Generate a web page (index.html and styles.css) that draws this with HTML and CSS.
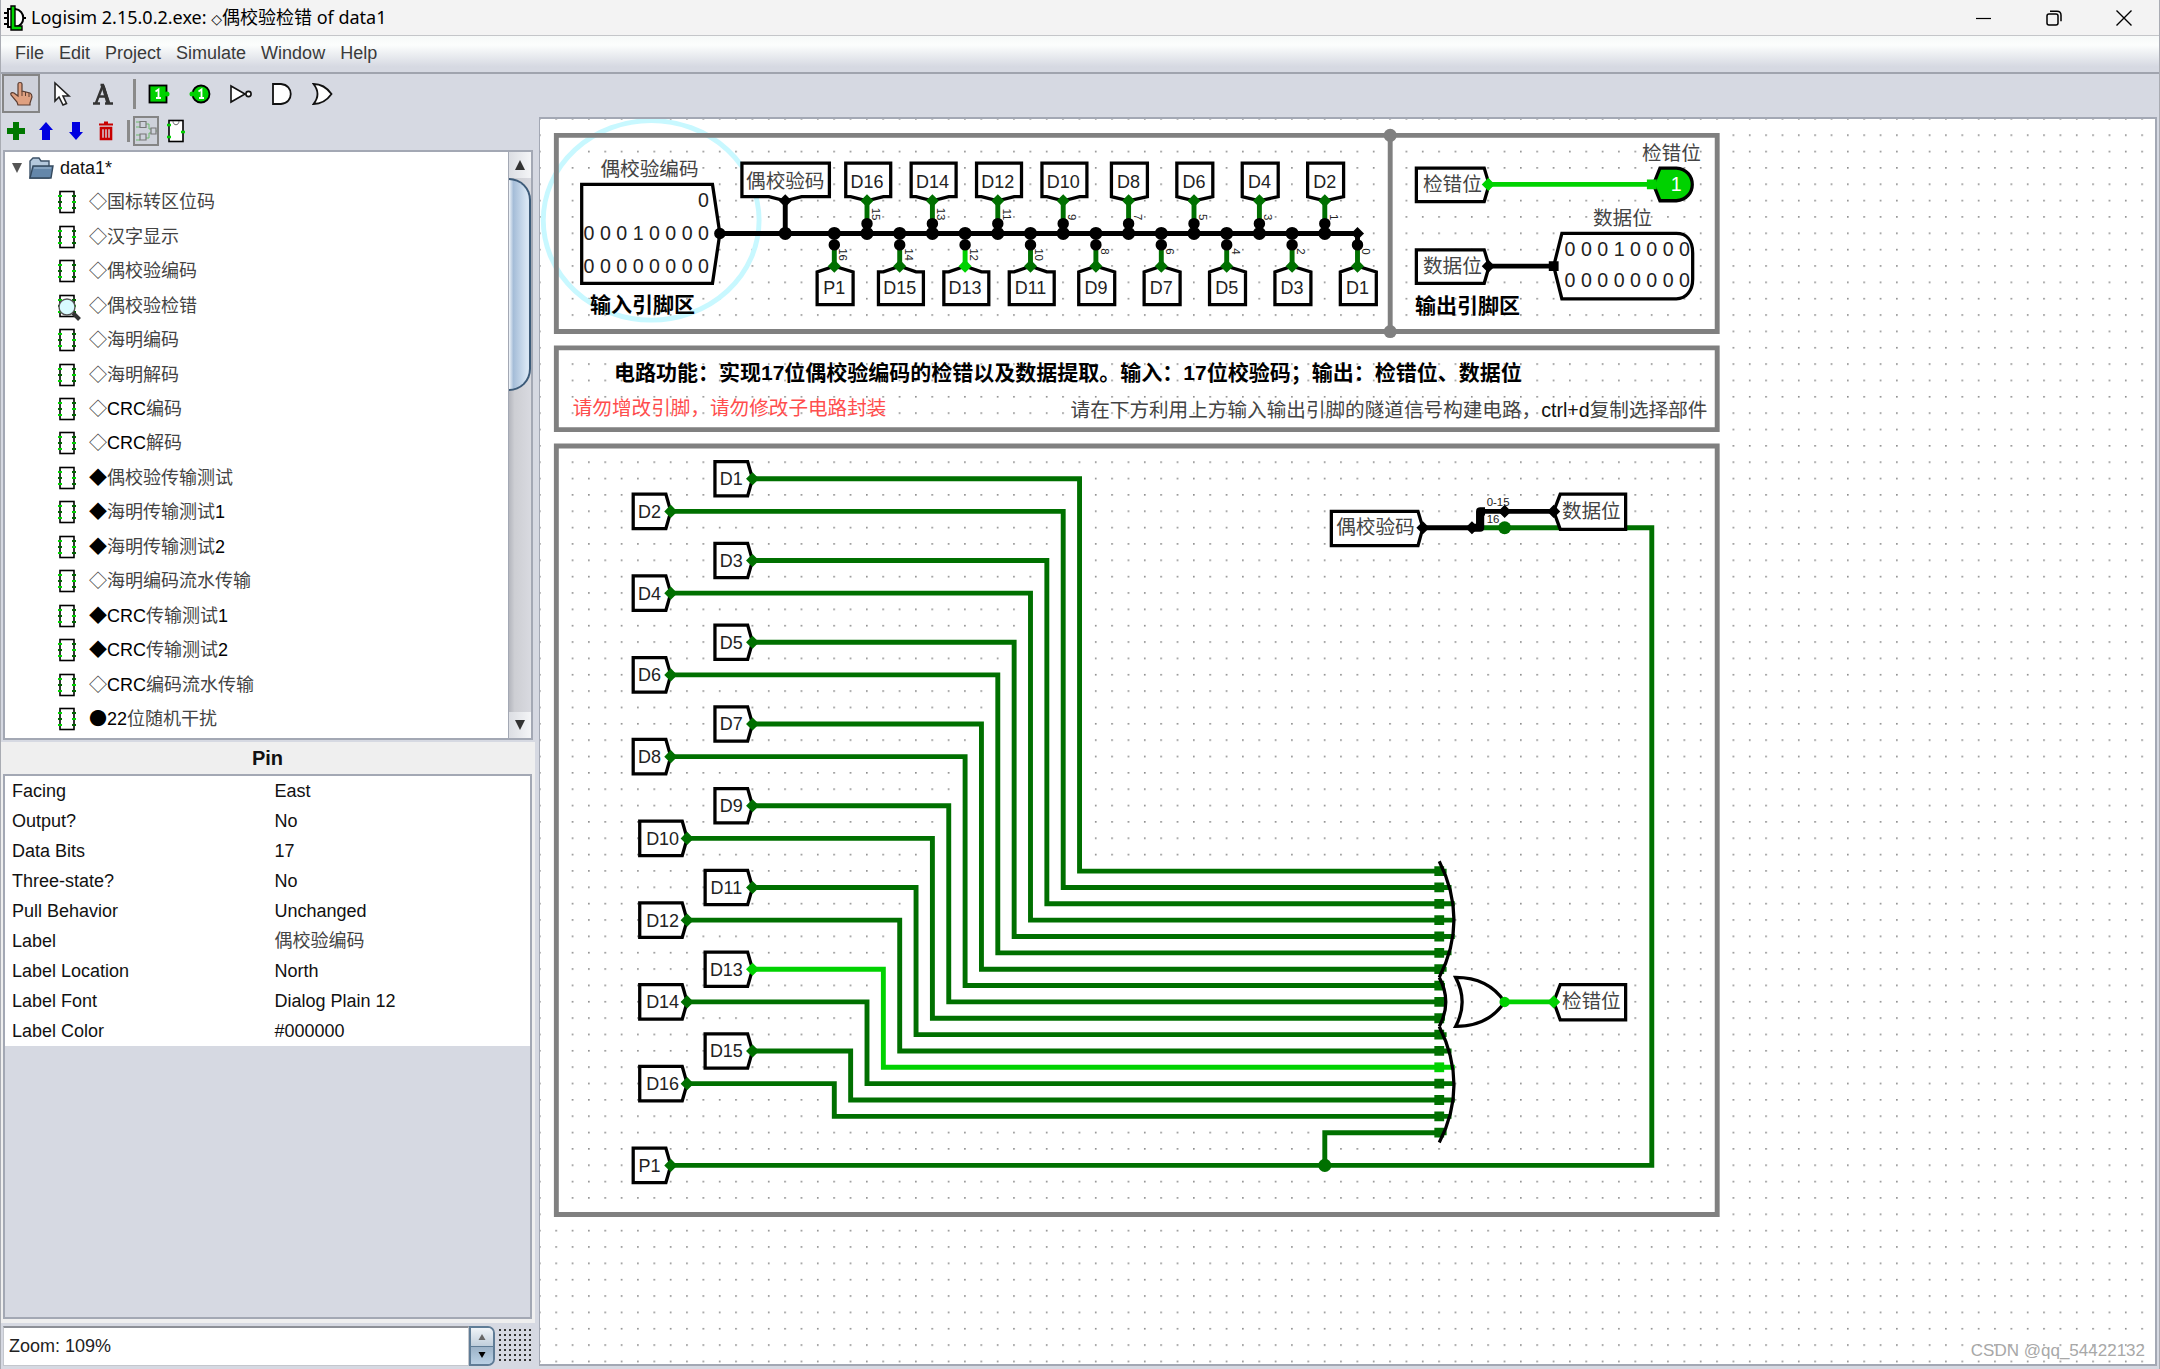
FILE: index.html
```html
<!DOCTYPE html>
<html lang="zh-CN">
<head>
<meta charset="utf-8">
<title>Logisim 2.15.0.2.exe: ◇偶校验检错 of data1</title>
<link rel="stylesheet" href="styles.css">
</head>
<body>
<svg class="defs" aria-hidden="true">
  <defs>
    <symbol id="chip" viewBox="0 0 20 24">
      <rect x="3" y="1.5" width="14" height="21" fill="#fff" stroke="#000" stroke-width="1.6"/>
      <path d="M1 6h4M1 18h4M15 12h4" stroke="#00d200" stroke-width="2"/>
      <path d="M1 12h4M15 6h4M15 18h4" stroke="#006400" stroke-width="2"/>
    </symbol>
  </defs>
</svg>
<div class="window">
  <header class="titlebar">
    <svg class="logo" viewBox="0 0 24 26" width="24" height="26">
      <path d="M1 8h5M1 13h5M1 19h5M20 13h3" stroke="#000" stroke-width="2"/>
      <path d="M5 4h7c11 1 11 17 0 18H5z" fill="#fff" stroke="#000" stroke-width="2"/>
      <path d="M8 1h4v20h7v4H8z" fill="#00d800" stroke="#000" stroke-width="1.4"/>
    </svg>
    <h1 class="title">Logisim 2.15.0.2.exe: <span class="lozenge">◇</span>偶校验检错 of data1</h1>
    <div class="controls">
      <button class="ctl" aria-label="Minimize"><svg width="16" height="16"><path d="M0 8.500h15" stroke="#000" stroke-width="1.2"/></svg></button>
      <button class="ctl" aria-label="Restore"><svg width="16" height="16" fill="none" stroke="#000" stroke-width="1.5"><rect x="1" y="4" width="11" height="11" rx="2"/><path d="M4 1.200h7c3 0 4 1 4 4v6"/></svg></button>
      <button class="ctl" aria-label="Close"><svg width="16" height="16"><path d="M.5.5l15 15M15.500.5l-15 15" stroke="#000" stroke-width="1.4"/></svg></button>
    </div>
  </header>
  <nav class="menubar">
    <button>File</button><button>Edit</button><button>Project</button><button>Simulate</button><button>Window</button><button>Help</button>
  </nav>
  <div class="toolbar">
    <button class="tool on" aria-label="Poke"><svg width="26" height="26" viewBox="0 0 26 26"><path d="M10 24l-1-3-6-7c-1-2 1-3 3-2l4 3V3c0-2 4-2 4 0v7l8 2c2 1 2 2 2 4l-2 6v2z" fill="#dfa080" stroke="#5a3c30" stroke-width="1.2"/><path d="M14 10v5M17.500 11v4M21 12v4" stroke="#5a3c30"/></svg></button>
    <button class="tool" aria-label="Edit"><svg width="20" height="26" viewBox="0 0 20 26"><path d="M3 2v18l4-4 4 8 3.500-1.500-3.500-7.500h6z" fill="#fff" stroke="#222" stroke-width="1.6"/></svg></button>
    <button class="tool" aria-label="Text"><svg width="22" height="24" viewBox="0 0 22 24"><path d="M11 3L4 21M11 3l6 18M6.500 14.500h8.500M1 21.500h7M13 21.500h8M8.500 3H12" stroke="#333" stroke-width="2.400" fill="none"/><path d="M11 4l5 17" stroke="#333" stroke-width="3.400"/></svg></button>
    <span class="sep"></span>
    <button class="tool" aria-label="Input pin"><svg width="22" height="20" viewBox="0 0 22 20"><rect x="1.500" y="1.500" width="17" height="17" fill="#00d200" stroke="#000" stroke-width="1.800"/><circle cx="19" cy="10" r="2.500" fill="#00d200"/><path d="M7.500 7.500L10.500 5.500v8.500M8 14h5" stroke="#fff" stroke-width="1.800" fill="none"/></svg></button>
    <button class="tool" aria-label="Output pin"><svg width="22" height="20" viewBox="0 0 22 20"><circle cx="12" cy="10" r="8.500" fill="#00d200" stroke="#000" stroke-width="1.800"/><circle cx="3" cy="10" r="2.500" fill="#00d200"/><path d="M9.500 7.500L12.500 5.500v8.500M10 14h5" stroke="#fff" stroke-width="1.800" fill="none"/></svg></button>
    <button class="tool" aria-label="NOT gate"><svg width="24" height="20" viewBox="0 0 24 20" fill="#fff" stroke="#111" stroke-width="1.600"><path d="M2 2l14 8-14 8z"/><circle cx="19.500" cy="10" r="2.600"/></svg></button>
    <button class="tool" aria-label="AND gate"><svg width="22" height="22" viewBox="0 0 22 22"><path d="M2 1h8c13 1 13 19 0 20H2z" fill="#fff" stroke="#111" stroke-width="1.800"/></svg></button>
    <button class="tool" aria-label="OR gate"><svg width="22" height="22" viewBox="0 0 22 22"><path d="M1.500 1c8 0 13 3 18 10-5 7-10 10-18 10q8-10 0-20z" fill="#fff" stroke="#111" stroke-width="1.800"/></svg></button>
  </div>
  <div class="work">
    <aside class="side">
      <div class="minibar">
        <button class="mini" aria-label="Add circuit"><svg width="20" height="20"><path d="M10 1v18M1 10h18" stroke="#007800" stroke-width="6"/></svg></button>
        <button class="mini" aria-label="Move up"><svg width="16" height="20"><path d="M8 1l7 8h-3v10H4V9H1z" fill="#0000e0"/></svg></button>
        <button class="mini" aria-label="Move down"><svg width="16" height="20"><path d="M8 19l7-8h-3V1H4v10H1z" fill="#0000e0"/></svg></button>
        <button class="mini" aria-label="Delete"><svg width="16" height="20"><path d="M1 3.500h14M6 1.500h4" stroke="#c80000" stroke-width="2"/><path d="M3 7h10v11H3z" fill="none" stroke="#c80000" stroke-width="2.600"/><path d="M6.500 7v10M9.500 7v10" stroke="#c80000" stroke-width="1.600"/></svg></button>
        <span class="sep"></span>
        <button class="mini on" aria-label="Edit layout"><svg width="22" height="22" fill="none"><path d="M1 2h4M1 7h4M1 15h4M1 20h4M11 4h3v5h2M11 18h3v-5h2M21 11h1" stroke="#6dbb6d"/><path d="M5 1.500h6v6H5zM5 14h6v6H5zM16 8h5v6h-5z" stroke="#777" stroke-width="1.200"/></svg></button>
        <button class="mini" aria-label="Edit appearance"><svg width="20" height="24"><rect x="3" y="1.500" width="14" height="21" fill="#fff" stroke="#000" stroke-width="1.600"/><path d="M7 2c0 5 6 5 6 0" fill="none" stroke="#666"/><path d="M1 6h4M1 18h4M15 13h4" stroke="#00d200" stroke-width="2.400"/></svg></button>
      </div>
      <div class="tree">
        <ul class="tree-list">
          <li class="root"><svg width="12" height="12"><path d="M1 1h10L6 11z" fill="#555"/></svg><svg width="26" height="24" viewBox="0 0 26 24"><path d="M2 22V5l3-3h6l2 3h8v17z" fill="#b4c8dc" stroke="#3c5268" stroke-width="1.400"/><path d="M5 10h20l-2 12H2z" fill="#6487aa" stroke="#34495e" stroke-width="1.400"/><path d="M6 12h17" stroke="#a9c1d8"/></svg><span>data1*</span></li>
          <li><svg><use href="#chip"/></svg><span><i>◇</i>国标转区位码</span></li>
          <li><svg><use href="#chip"/></svg><span><i>◇</i>汉字显示</span></li>
          <li><svg><use href="#chip"/></svg><span><i>◇</i>偶校验编码</span></li>
          <li><svg><use href="#chip"/><circle cx="10" cy="13" r="8" fill="#d8fbff" stroke="#555" stroke-width="1.4"/><path d="M16 19l6.500 6.500" stroke="#333" stroke-width="4"/></svg><span><i>◇</i>偶校验检错</span></li>
          <li><svg><use href="#chip"/></svg><span><i>◇</i>海明编码</span></li>
          <li><svg><use href="#chip"/></svg><span><i>◇</i>海明解码</span></li>
          <li><svg><use href="#chip"/></svg><span><i>◇</i><b>CRC</b>编码</span></li>
          <li><svg><use href="#chip"/></svg><span><i>◇</i><b>CRC</b>解码</span></li>
          <li><svg><use href="#chip"/></svg><span><i class="full">◆</i>偶校验传输测试</span></li>
          <li><svg><use href="#chip"/></svg><span><i class="full">◆</i>海明传输测试<b>1</b></span></li>
          <li><svg><use href="#chip"/></svg><span><i class="full">◆</i>海明传输测试<b>2</b></span></li>
          <li><svg><use href="#chip"/></svg><span><i>◇</i>海明编码流水传输</span></li>
          <li><svg><use href="#chip"/></svg><span><i class="full">◆</i><b>CRC</b>传输测试<b>1</b></span></li>
          <li><svg><use href="#chip"/></svg><span><i class="full">◆</i><b>CRC</b>传输测试<b>2</b></span></li>
          <li><svg><use href="#chip"/></svg><span><i>◇</i><b>CRC</b>编码流水传输</span></li>
          <li><svg><use href="#chip"/></svg><span><i class="full">●</i><b>22</b>位随机干扰</span></li>
        </ul>
        <div class="scroll">
          <button class="arrow" aria-label="Scroll up"><svg width="12" height="12"><path d="M6 1l5 10H1z" fill="#333"/></svg></button>
          <div class="track"><div class="thumb"></div></div>
          <button class="arrow" aria-label="Scroll down"><svg width="12" height="12"><path d="M6 11L1 1h10z" fill="#333"/></svg></button>
        </div>
      </div>
      <section class="props">
        <h2>Pin</h2>
        <div class="props-box">
          <table>
            <tr><th>Facing</th><td>East</td></tr>
            <tr><th>Output?</th><td>No</td></tr>
            <tr><th>Data Bits</th><td>17</td></tr>
            <tr><th>Three-state?</th><td>No</td></tr>
            <tr><th>Pull Behavior</th><td>Unchanged</td></tr>
            <tr><th>Label</th><td class="cjk">偶校验编码</td></tr>
            <tr><th>Label Location</th><td>North</td></tr>
            <tr><th>Label Font</th><td>Dialog Plain 12</td></tr>
            <tr><th>Label Color</th><td>#000000</td></tr>
          </table>
        </div>
      </section>
      <div class="zoombar">
        <input type="text" value="Zoom: 109%" aria-label="Zoom">
        <div class="spin">
          <button aria-label="Zoom in"><svg width="8" height="8"><path d="M4 1l3.500 6h-7z" fill="#666"/></svg></button>
          <button class="down" aria-label="Zoom out"><svg width="8" height="8"><path d="M4 7L.5 1h7z" fill="#000"/></svg></button>
        </div>
        <div class="gridtoggle"></div>
      </div>
    </aside>
    <main class="canvas">
      <svg class="sheet" width="100%" height="100%">
        <defs>
          <pattern id="grid" width="10" height="10" patternUnits="userSpaceOnUse" patternTransform="translate(-1 -1) scale(1.635)"><rect width="1" height="1" fill="#8c8c8c"/></pattern>
        </defs>
        <rect width="100%" height="100%" fill="url(#grid)"/>
        <g transform="scale(1.635)">
          <ellipse class="halo" cx="68" cy="62" rx="66" ry="61"/>
          <path class="frame" d="M10 10h710v120H10zM520 10v120M10 140h710v50H10zM10 200h710v470H10z"/>
          <circle class="fdot" cx="520" cy="10" r="4"/><circle class="fdot" cx="520" cy="130" r="4"/>

          <!-- input pin, bus and splitter -->
          <path class="box" d="M25.500 40h80l4.500 30-4.500 30.500h-80z"/>
          <path class="wire bus" d="M110 70h390v6M150 70V50"/>
          <g class="wire off">
            <path d="M200 64V50M240 64V50M280 64V50M320 64V50M360 64V50M400 64V50M440 64V50M480 64V50"/>
            <path d="M180 76v14M220 76v14M300 76v14M340 76v14M380 76v14M420 76v14M460 76v14M500 76v14"/>
          </g>
          <path class="wire lit" d="M260 76v14"/>
          <path class="dots" d="M150 70h0M200 70h0M240 70h0M280 70h0M320 70h0M360 70h0M400 70h0M440 70h0M480 70h0M180 70h0M220 70h0M260 70h0M300 70h0M340 70h0M380 70h0M420 70h0M460 70h0"/>
          <path class="dots small" d="M110 70h0M200 64h0M240 64h0M280 64h0M320 64h0M360 64h0M400 64h0M440 64h0M480 64h0M180 77h0M220 77h0M260 77h0M300 77h0M340 77h0M380 77h0M420 77h0M460 77h0M500 77h0"/>
          <path class="port" d="M500 66l4 4-4 4-4-4z"/>
          <path class="box" d="M123.500 27H177v20.500h-17L150 50l-10-2.500h-16.500z"/>
          <path class="box" d="M187 27h27.500v20.500H210L200 50l-10-2.500h-3zM227 27h27.500v20.500H250L240 50l-10-2.500h-3zM267 27h27.500v20.500H290L280 50l-10-2.500h-3zM307 27h27.500v20.500H330L320 50l-10-2.500h-3z"/>
          <path class="box" d="M349.500 27h22v20.500L360 50l-10.500-2.500zM389.500 27h22v20.500L400 50l-10.500-2.500zM429.500 27h22v20.500L440 50l-10.500-2.500zM469.500 27h22v20.500L480 50l-10.500-2.500z"/>
          <path class="box" d="M169.500 113.500h22V93.500L180 90l-10.500 3.500zM329.500 113.500h22V93.500L340 90l-10.500 3.500zM369.500 113.500h22V93.500L380 90l-10.500 3.500zM409.500 113.500h22V93.500L420 90l-10.500 3.500zM449.500 113.500h22V93.500L460 90l-10.500 3.500zM489.500 113.500h22V93.500L500 90l-10.500 3.500z"/>
          <path class="box" d="M207 113.500h27.500v-20H230L220 90l-10 3.500h-3zM247 113.500h27.500v-20H270L260 90l-10 3.500h-3zM287 113.500h27.500v-20H310L300 90l-10 3.500h-3z"/>
          <path class="port" d="M150 46l4 4-4 4-4-4z"/>
          <g class="port off">
            <path d="M200 46l4 4-4 4-4-4zM240 46l4 4-4 4-4-4zM280 46l4 4-4 4-4-4zM320 46l4 4-4 4-4-4zM360 46l4 4-4 4-4-4zM400 46l4 4-4 4-4-4zM440 46l4 4-4 4-4-4zM480 46l4 4-4 4-4-4z"/>
            <path d="M180 86l4 4-4 4-4-4zM220 86l4 4-4 4-4-4zM300 86l4 4-4 4-4-4zM340 86l4 4-4 4-4-4zM380 86l4 4-4 4-4-4zM420 86l4 4-4 4-4-4zM460 86l4 4-4 4-4-4zM500 86l4 4-4 4-4-4z"/>
          </g>
          <path class="port lit" d="M260 86l4 4-4 4-4-4z"/>

          <!-- output pins -->
          <path class="box" d="M536 30h41.500l3 10-3 10.500H536zM536 80h41.500l3 10-3 10.500H536z"/>
          <path class="box green" d="M681 40l4-10h10c13 1 13 19 0 20h-10z"/>
          <path class="box" d="M620 90l5-20h70c6 0 10 4 10 12v16c0 7-4 12-10 12h-70z"/>
          <path class="wire lit" d="M580 40h100"/><path class="wire bus" d="M580 90h40"/>
          <path class="port lit" d="M580 36l4 4-4 4-4-4zM677 37h6v6h-6z"/>
          <path class="port" d="M580 86l4 4-4 4-4-4zM617 87h6v6h-6z"/>

          <!-- wiring into the parity gate -->
          <g class="wire off">
            <path d="M130 220h200v240h223M80 240h240v230h236M130 270h180v210h248M80 290h220v200h258M130 320h160v180h268M80 340h200v170h276M130 370h140v150h283M80 390h180v140h292M130 420h120v120h303M90 440h150v110h312M130 470h100v90h323M90 490h130v80h336"/>
            <path d="M90 540h110v50h358M130 570h60v30h368M90 590h90v20h376M80 640h600V250H575M480 640v-20h73"/>
          </g>
          <path class="wire lit" d="M130 520h80v60h348M590 540h30"/>
          <path class="port off" d="M547 457h6v6h-6zM547 467h6v6h-6zM547 477h6v6h-6zM547 487h6v6h-6zM547 497h6v6h-6zM547 507h6v6h-6zM547 517h6v6h-6zM547 527h6v6h-6zM547 537h6v6h-6zM547 547h6v6h-6zM547 557h6v6h-6zM547 567h6v6h-6zM547 587h6v6h-6zM547 597h6v6h-6zM547 607h6v6h-6zM547 617h6v6h-6z"/>
          <path class="port lit" d="M547 577h6v6h-6z"/>
          <path class="gate" d="M550 454q18 36 0 71M550 525q8 15 0 30M550 555q18 36 0 71"/>
          <path class="gate" d="M590 540q-10-15-30-15 8 15 0 30 20 0 30-15z"/>
          <circle class="port lit" cx="590" cy="540" r="3.200"/>
          <circle class="port off" cx="480" cy="640" r="4"/><circle class="port off" cx="590" cy="250" r="4"/>
          <path class="wire bus" d="M540 250h30M575 240h45"/>
          <path class="thick" d="M570 250h5v-10h3"/>
          <path class="box" d="M484 240h53l3 10-3 11h-53z"/>
          <path class="box" d="M620 240l4-10.500h40V251h-40zM620 540l4-10.500h40V551h-40z"/>
          <path class="port" d="M540 246l4 4-4 4-4-4zM570 246l4 4-4 4-4-4zM590 236l4 4-4 4-4-4zM620 236l4 4-4 4-4-4z"/>
          <path class="port lit" d="M620 536l4 4-4 4-4-4z"/>

          <path class="box" d="M107 209.500h20l3 10.500-3 10.500h-20zM107 259.500h20l3 10.500-3 10.500h-20zM107 309.500h20l3 10.500-3 10.500h-20zM107 359.500h20l3 10.500-3 10.500h-20zM107 409.500h20l3 10.500-3 10.500h-20z"/>
          <path class="box" d="M57 229.500h20l3 10.500-3 10.500H57zM57 279.500h20l3 10.500-3 10.500H57zM57 329.500h20l3 10.500-3 10.500H57zM57 379.500h20l3 10.500-3 10.500H57zM57 629.500h20l3 10.500-3 10.500H57z"/>
          <path class="box" d="M101 459.500h26l3 10.500-3 10.500h-26zM101 509.500h26l3 10.500-3 10.500h-26zM101 559.500h26l3 10.500-3 10.500h-26zM61 429.500h26l3 10.500-3 10.500H61zM61 479.500h26l3 10.500-3 10.500H61zM61 529.500h26l3 10.500-3 10.500H61zM61 579.500h26l3 10.500-3 10.500H61z"/>
          <path class="port off" d="M130 216l4 4-4 4-4-4zM130 266l4 4-4 4-4-4zM130 316l4 4-4 4-4-4zM130 366l4 4-4 4-4-4zM130 416l4 4-4 4-4-4zM130 466l4 4-4 4-4-4zM130 566l4 4-4 4-4-4zM80 236l4 4-4 4-4-4zM80 286l4 4-4 4-4-4zM80 336l4 4-4 4-4-4zM80 386l4 4-4 4-4-4zM80 636l4 4-4 4-4-4zM90 436l4 4-4 4-4-4zM90 486l4 4-4 4-4-4zM90 536l4 4-4 4-4-4zM90 586l4 4-4 4-4-4z"/>
          <path class="port lit" d="M130 516l4 4-4 4-4-4z"/>

          <!-- tunnel names -->
          <g class="name">
            <text x="200" y="42">D16</text><text x="240" y="42">D14</text><text x="280" y="42">D12</text><text x="320" y="42">D10</text><text x="360" y="42">D8</text><text x="400" y="42">D6</text><text x="440" y="42">D4</text><text x="480" y="42">D2</text>
            <text x="180" y="107">P1</text><text x="220" y="107">D15</text><text x="260" y="107">D13</text><text x="300" y="107">D11</text><text x="340" y="107">D9</text><text x="380" y="107">D7</text><text x="420" y="107">D5</text><text x="460" y="107">D3</text><text x="500" y="107">D1</text>
            <text x="117" y="224">D1</text><text x="67" y="244">D2</text><text x="117" y="274">D3</text><text x="67" y="294">D4</text><text x="117" y="324">D5</text><text x="67" y="344">D6</text><text x="117" y="374">D7</text><text x="67" y="394">D8</text><text x="117" y="424">D9</text>
            <text x="75" y="444">D10</text><text x="114" y="474">D11</text><text x="75" y="494">D12</text><text x="114" y="524">D13</text><text x="75" y="544">D14</text><text x="114" y="574">D15</text><text x="75" y="594">D16</text><text x="67" y="644">P1</text>
          </g>
          <g class="label">
            <text x="67" y="35">偶校验编码</text><text x="150" y="42">偶校验码</text><text x="558" y="44">检错位</text><text x="558" y="94">数据位</text><text x="692" y="25">检错位</text><text x="662" y="65">数据位</text>
            <text x="511" y="254">偶校验码</text><text x="643" y="244">数据位</text><text x="643" y="544">检错位</text>
          </g>
          <g class="digit">
            <text x="100" y="54">0</text>
            <text x="30 40 50 60 70 80 90 100" y="74">00010000</text>
            <text x="30 40 50 60 70 80 90 100" y="94">00000000</text>
            <text x="630 640 650 660 670 680 690 700" y="84">00010000</text>
            <text x="630 640 650 660 670 680 690 700" y="103">00000000</text>
            <text class="white" x="695" y="44">1</text>
          </g>
          <g class="tiny">
            <text x="579" y="237">0-15</text><text x="579" y="247">16</text>
            <g class="tend">
              <text transform="translate(203 62) rotate(90)">15</text><text transform="translate(243 62) rotate(90)">13</text><text transform="translate(283 62) rotate(90)">11</text><text transform="translate(323 62) rotate(90)">9</text><text transform="translate(363 62) rotate(90)">7</text><text transform="translate(403 62) rotate(90)">5</text><text transform="translate(443 62) rotate(90)">3</text><text transform="translate(483 62) rotate(90)">1</text>
            </g>
            <g class="tstart">
              <text transform="translate(183 79) rotate(90)">16</text><text transform="translate(223 79) rotate(90)">14</text><text transform="translate(263 79) rotate(90)">12</text><text transform="translate(303 79) rotate(90)">10</text><text transform="translate(343 79) rotate(90)">8</text><text transform="translate(383 79) rotate(90)">6</text><text transform="translate(423 79) rotate(90)">4</text><text transform="translate(463 79) rotate(90)">2</text><text transform="translate(503 79) rotate(90)">0</text>
            </g>
          </g>
          <text class="note red" x="20" y="181">请勿增改引脚，请勿修改子电路封装</text>
          <text class="note end" x="714" y="182">请在下方利用上方输入输出引脚的隧道信号构建电路，<tspan class="latin">ctrl+d</tspan>复制选择部件</text>
        </g>
        <text class="head" x="74" y="261">电路功能：实现17位偶校验编码的检错以及数据提取。输入：17位校验码；输出：检错位、数据位</text>
        <text class="head" x="50" y="193">输入引脚区</text>
        <text class="head" x="875" y="194">输出引脚区</text>
      </svg>
      <span class="watermark">CSDN @qq_54422132</span>
    </main>
  </div>
</div>
</body>
</html>
```

FILE: styles.css
```css
* { box-sizing: border-box; }

html, body { height: 100%; margin: 0; }

body {
  font-family: "Liberation Sans", "Noto Sans CJK SC", sans-serif;
  font-size: 18px;
  color: #111;
  background: #d6d9e2;
}

button {
  font: inherit;
  color: inherit;
  padding: 0;
  border: 0;
  background: none;
}

svg { display: block; flex: none; }

.defs { position: absolute; width: 0; height: 0; }

.window {
  display: flex;
  flex-direction: column;
  min-height: 100vh;
  border-left: 1px solid #a9acb3;
  border-right: 1px solid #a9acb3;
}

.titlebar {
  display: flex;
  align-items: center;
  height: 36px;
  padding-left: 2px;
  background: #f3f3f3;
  border-bottom: 1px solid #c4c6c9;
}

.title {
  flex: 1;
  margin: 0 0 0 4px;
  font: 400 18px/34px "Noto Sans", "Noto Sans CJK SC", sans-serif;
  color: #000;
}

.lozenge { font-size: 14px; font-family: "DejaVu Sans", sans-serif; }

.controls { display: flex; }

.ctl {
  display: grid;
  place-items: center;
  width: 70px;
  height: 34px;
}

.menubar {
  display: flex;
  gap: 15px;
  height: 38px;
  padding: 0 14px 2px;
  color: #3a3a3a;
  background: linear-gradient(#f6f9f8, #fcfefd 25%, #d6d9e2 85%);
  border-bottom: 2px solid #a0a4ae;
}

.toolbar { display: flex; height: 42px; padding-left: 1px; }

.tool {
  display: grid;
  place-items: center;
  width: 38px;
  height: 39px;
  margin-right: 3px;
}

.on { border: 2px solid #858585; background: #ced1da; }

.sep { width: 3px; background: #8a8a8a; }

.toolbar .sep { height: 30px; margin: 5px 4px 0 8px; }

.work { display: flex; flex: 1; padding: 0 2px 3px 2px; }

.side { display: flex; flex-direction: column; width: 536px; flex: none; }

.minibar { display: flex; align-items: center; height: 29px; margin-bottom: 5px; }

.mini { display: grid; place-items: center; width: 26px; height: 30px; margin-right: 4px; }

.minibar .sep { height: 22px; margin: 0 3px 0 4px; }

.tree {
  display: flex;
  width: 530px;
  height: 590px;
  background: #fff;
  border: 2px solid #a3a8b4;
}

.tree-list {
  display: flex;
  flex-direction: column;
  flex: 1;
  margin: 0;
  padding: 0;
  list-style: none;
}

.tree-list li {
  display: flex;
  align-items: center;
  flex: 1 1 0;
  min-height: 0;
  padding: 0 0 3px 52px;
  line-height: 30px;
  color: #444;
}

.tree-list li svg { width: 20px; height: 24px; margin-right: 12px; overflow: visible; }

.tree-list .root { padding-left: 6px; color: #111; }

.tree-list .root svg:first-child { width: 12px; height: 12px; margin-right: 5px; }

.tree-list .root svg { width: 26px; margin-right: 6px; }

.tree-list b { font-weight: 400; color: #000; }

.tree-list i { font-family: "Noto Sans CJK SC", sans-serif; font-style: normal; line-height: 1; }

.tree-list .full { color: #000; }

.scroll {
  display: flex;
  flex-direction: column;
  width: 23px;
  border-left: 1px solid #a3a8b4;
}

.arrow {
  display: grid;
  place-items: center;
  height: 26px;
  background: linear-gradient(90deg, #dcdee3, #f4f5f7);
}

.track { flex: 1; background: linear-gradient(90deg, #b4b6bd, #cdced3 25%, #d9dae0); }

.thumb {
  height: 213px;
  border: 2px solid #3c5a78;
  border-left: 0;
  border-radius: 0 22px 22px 0;
  background: linear-gradient(90deg, #f2f6fa, #a5bdd8 22%, #d8e6f4 90%);
}

.props {
  display: flex;
  flex: 1;
  flex-direction: column;
  margin: 2px 4px 0 -2px;
  padding: 0 3px 4px 2px;
  background: #efefef;
}

.props h2 { margin: 0; font-size: 20px; line-height: 32px; text-align: center; }

.props-box { flex: 1; border: 2px solid #a3a8b4; background: #d6d9e2; }

table { width: 100%; border-collapse: collapse; background: #fff; }

th, td {
  height: 30px;
  padding: 0 0 0 7px;
  font-weight: 400;
  text-align: left;
  line-height: 24px;
}

th { width: 50%; }

.cjk { color: #444; }

.zoombar { display: flex; height: 40px; margin-top: 3px; }

.zoombar input {
  width: 466px;
  padding: 0 5px;
  border: 1px solid #c4c7cd;
  border-top: 2px solid #8d9097;
  background: #fff;
  font: inherit;
  color: #222;
}

.spin {
  display: flex;
  flex-direction: column;
  width: 26px;
  border: 2px solid #5f7c96;
  border-radius: 0 7px 7px 0;
  overflow: hidden;
}

.spin button { flex: 1; display: grid; place-items: center; background: linear-gradient(#f0f4f8, #c0cedb); }

.spin .down { border-top: 1px solid #5f7c96; background: linear-gradient(#9db3c8, #b9d0e4); }

.gridtoggle {
  width: 34px;
  height: 35px;
  margin: 3px 0 0 4px;
  background: radial-gradient(circle at 1px 1px, #333 1px, transparent 1px) 0 0 / 5px 5px;
}

.canvas {
  position: relative;
  flex: 1;
  margin-top: 1px;
  background: #fff;
  border: 2px solid #a3a8b4;
  border-left-width: 1px;
  overflow: hidden;
}

.sheet { position: absolute; inset: 0; }

.halo { fill: none; stroke: #c8f8ff; stroke-width: 3; }
.frame { fill: none; stroke: #808080; stroke-width: 3; }
.fdot { fill: #808080; }
.wire { fill: none; stroke-width: 3; stroke-linecap: square; }
.wire.bus { stroke: #000; }
.wire.off { stroke: #007000; }
.wire.lit { stroke: #00d200; }
.dots { stroke: #000; stroke-width: 8; stroke-linecap: round; }
.dots.small { stroke-width: 7; }
.box { fill: #fff; stroke: #000; stroke-width: 2; }
.box.green { fill: #00d200; }
.gate { fill: none; stroke: #000; stroke-width: 2; }
.thick { fill: none; stroke: #000; stroke-width: 5; stroke-linejoin: round; }
.port.off { fill: #007000; }
.port.lit { fill: #00d200; }

.name { font-size: 11px; text-anchor: middle; fill: #222; }
.label { font-size: 12px; text-anchor: middle; fill: #444; }
.digit { font-size: 12px; text-anchor: middle; fill: #222; }
.digit .white { fill: #fff; }
.tiny { font-size: 7px; fill: #222; }
.tend { text-anchor: end; }
.note { font-size: 12px; fill: #444; }
.note.red { fill: #ff4d4d; }
.note.end { text-anchor: end; }
.latin { fill: #111; }
.head { font-size: 21px; font-weight: 700; fill: #000; }

.watermark {
  position: absolute;
  right: 10px;
  bottom: 3px;
  font-size: 17px;
  color: #a8a8a8;
}
```
